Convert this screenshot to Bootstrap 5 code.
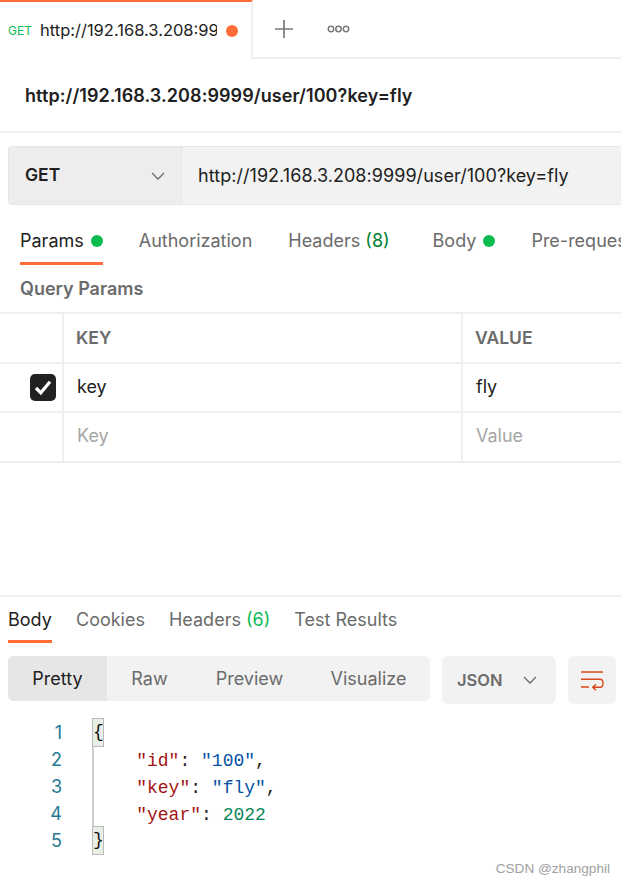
<!DOCTYPE html>
<html lang="en">
<head>
<meta charset="utf-8">
<title>Request</title>
<link href="https://cdn.jsdelivr.net/npm/bootstrap@5.3.0/dist/css/bootstrap.min.css" rel="stylesheet">
<style>
html,body{height:886px;overflow:hidden}
body{font-family:Inter,"Noto Sans",sans-serif;color:#212121;background:#fff;position:relative;font-size:18px}
.tabbar{height:59px}
.reqtab{width:253px;height:59px;border-top:2px solid #ff6c37;border-right:2px solid #efefef;padding-left:8px;padding-right:14px}
.reqtab .verb{font-size:12px;color:#0cbb52;width:32px;flex:none}
.reqtab .ttl{font-size:16.500px;width:177px;flex:none;overflow:hidden;white-space:nowrap;color:#212121}
.odot{width:12px;height:12px;border-radius:50%;background:#ff6c37;flex:none;margin-left:9px}
.tabtools{flex:1;height:59px;border-bottom:2px solid #efefef;padding-left:21px;gap:33px}
.titlerow{height:74px;border-bottom:2px solid #efefef;padding-left:25px;font-size:18px;letter-spacing:.07px;font-weight:600;white-space:nowrap}
.urlbar{height:59px;margin:13px 0 0 8px;border:1px solid #e6e6e6;border-right:0;border-radius:4px 0 0 4px;background:#f2f2f2;white-space:nowrap}
.methodbox{width:173px;height:100%;background:#ededed;border-right:1px solid #e6e6e6;padding:0 16px;font-weight:600;font-size:17.500px;flex:none;border-radius:4px 0 0 4px}
.urlval{padding-left:16px;font-size:18px;letter-spacing:.05px}
.ptabs{height:61px;padding-left:20px;white-space:nowrap;overflow:hidden;flex-wrap:nowrap;align-items:flex-start;gap:36px}
.ptab{color:#6b6b6b;font-size:18px;height:60px;padding-top:24px;flex:none;display:flex;align-items:flex-start;line-height:24px}
.ptab.on{color:#212121;border-bottom:3px solid #ff6c37}
.ptab.gapx{margin-left:7px}
.gdot{width:12px;height:12px;border-radius:50%;background:#0cbb52;display:inline-block;margin:6px 0 0 7px}
.cnt8{color:#007f31}.cnt6{color:#0cbb52}
.qp{font-weight:600;color:#6b6b6b;height:46px;padding:11px 0 0 20px;line-height:24px;font-size:18px}
.ptable{table-layout:fixed;width:100%;border-collapse:collapse;margin:0;border-top:2px solid #efefef}
.ptable .c1{width:63px}.ptable .c2{width:399px}
.ptable td{border:0;border-bottom:2px solid #efefef;padding:0 0 0 13px;vertical-align:middle;font-size:18px;color:#212121;box-shadow:none}
.ptable td+td{border-left:2px solid #efefef}
.ptable tr.hd td{height:50px;font-weight:600;color:#6b6b6b;padding-left:12px;font-size:17.500px}
.ptable tr.rw td{height:49px;padding-bottom:2px}
.ptable tr.rw2 td{height:50px;color:#a6a6a6;padding-bottom:4px}
.ptable tr td:first-child{padding:0}
.chk{width:26px;height:27px;border-radius:5px;background:#212121;margin-left:30px;display:flex;align-items:center;justify-content:center}
.resp{margin-top:132px;border-top:2px solid #efefef}
.rtabs{height:46px;padding-left:8px;gap:24px;white-space:nowrap}
.rtab{font-size:18px;color:#6b6b6b;height:46px;padding-top:11px;line-height:24px}
.rtab.on{color:#212121;border-bottom:3px solid #ff6c37;width:44px}
.ctrls{margin:13px 0 0 8px;gap:12px;align-items:flex-start}
.seg{width:422px;height:45px;background:#f2f2f2;border-radius:6px;overflow:hidden;font-size:18px;color:#6b6b6b}
.seg>div{height:100%;display:flex;align-items:center;justify-content:center}
.seg .act{width:99px;background:#e6e6e6;color:#212121}
.seg .s2{width:85px}.seg .s3{width:115px}.seg .s4{width:123px}
.jsonb{width:114px;height:48px;background:#f2f2f2;border-radius:6px;padding:0 19px 0 15px;font-weight:600;color:#6b6b6b;font-size:16.500px}
.wrapb{width:48px;height:48px;background:#f2f2f2;border-radius:6px}
.codeb{margin-top:15px;font-family:"Liberation Mono",monospace;font-size:18px;line-height:27px}
.ln{width:62px;text-align:right;color:#237893;font-family:Inter,sans-serif;font-size:18px;flex:none}
.ln div,.cl{height:27px;display:block;white-space:pre}
.codelines{margin-left:31px;flex:1}
.brace{width:10px;height:27px;background:#e8efe6;outline:1px solid #b9b9b9;text-align:center;color:#111;overflow:hidden}
.guide{border-left:2px solid #cfcfcf;margin-left:-1px;text-indent:-1px;line-height:30px}
.k{color:#a31515}.s{color:#0451a5}.n{color:#098658}.p{color:#212121}
.wm{position:absolute;right:11px;top:859px;font-size:13.600px;color:#a0a0a0;font-family:"Liberation Sans",sans-serif}
</style>
</head>
<body>
<div class="tabbar d-flex">
  <div class="reqtab d-flex align-items-center">
    <span class="verb">GET</span><span class="ttl">http://192.168.3.208:9999/user/100?key=fly</span><span class="odot"></span>
  </div>
  <div class="tabtools d-flex align-items-center">
    <svg width="20" height="20" viewBox="0 0 20 20"><path d="M10 1v18M1 10h18" stroke="#7a7a7a" stroke-width="1.700" fill="none"/></svg>
    <svg width="23" height="8" viewBox="0 0 23 8"><g fill="none" stroke="#7a7a7a" stroke-width="1.500"><circle cx="4" cy="4" r="2.700"/><circle cx="11.500" cy="4" r="2.700"/><circle cx="19" cy="4" r="2.700"/></g></svg>
  </div>
</div>
<div class="titlerow d-flex align-items-center">http://192.168.3.208:9999/user/100?key=fly</div>
<div class="urlbar d-flex align-items-center">
  <div class="methodbox d-flex align-items-center justify-content-between">GET
    <svg width="14" height="8" viewBox="0 0 14 8"><path d="M1 1l6 6 6-6" stroke="#6b6b6b" stroke-width="1.300" fill="none"/></svg>
  </div>
  <div class="urlval">http://192.168.3.208:9999/user/100?key=fly</div>
</div>
<nav class="nav ptabs">
  <div class="ptab on">Params<span class="gdot"></span></div>
  <div class="ptab">Authorization</div>
  <div class="ptab">Headers&nbsp;<span class="cnt8">(8)</span></div>
  <div class="ptab gapx">Body<span class="gdot"></span></div>
  <div class="ptab">Pre-request Script</div>
</nav>
<div class="qp">Query Params</div>
<table class="table ptable">
  <colgroup><col class="c1"><col class="c2"><col></colgroup>
  <tr class="hd"><td></td><td>KEY</td><td>VALUE</td></tr>
  <tr class="rw"><td><div class="chk"><svg width="20" height="17" viewBox="0 0 20 17"><path d="M3 9l4.800 4.800 9.200-11" stroke="#fff" stroke-width="3.200" fill="none"/></svg></div></td><td>key</td><td>fly</td></tr>
  <tr class="rw2"><td></td><td>Key</td><td>Value</td></tr>
</table>
<div class="resp">
  <nav class="nav rtabs">
    <div class="rtab on">Body</div>
    <div class="rtab">Cookies</div>
    <div class="rtab">Headers <span class="cnt6">(6)</span></div>
    <div class="rtab">Test Results</div>
  </nav>
  <div class="ctrls d-flex">
    <div class="seg d-flex">
      <div class="act">Pretty</div>
      <div class="s2">Raw</div>
      <div class="s3">Preview</div>
      <div class="s4">Visualize</div>
    </div>
    <div class="jsonb d-flex align-items-center justify-content-between">JSON
      <svg width="14" height="8" viewBox="0 0 14 8"><path d="M1 1l6 6 6-6" stroke="#6b6b6b" stroke-width="1.300" fill="none"/></svg>
    </div>
    <div class="wrapb d-flex align-items-center justify-content-center">
      <svg width="24" height="24" viewBox="0 0 24 24"><g fill="none" stroke="#d9481c" stroke-width="1.400"><path d="M1 4h22M1 11.300h19c4 0 4 8 0 8h-7M16 16.300l-3.300 3 3.300 3M1 19h8"/></g></svg>
    </div>
  </div>
  <div class="codeb d-flex">
    <div class="ln"><div>1</div><div>2</div><div>3</div><div>4</div><div>5</div></div>
    <div class="codelines">
      <div class="cl brace">{</div>
      <div class="cl guide">    <span class="k">"id"</span><span class="p">: </span><span class="s">"100"</span><span class="p">,</span></div>
      <div class="cl guide">    <span class="k">"key"</span><span class="p">: </span><span class="s">"fly"</span><span class="p">,</span></div>
      <div class="cl guide">    <span class="k">"year"</span><span class="p">: </span><span class="n">2022</span></div>
      <div class="cl brace">}</div>
    </div>
  </div>
</div>
<div class="wm">CSDN @zhangphil</div>
<script src="https://cdn.jsdelivr.net/npm/bootstrap@5.3.0/dist/js/bootstrap.bundle.min.js"></script>
</body>
</html>
